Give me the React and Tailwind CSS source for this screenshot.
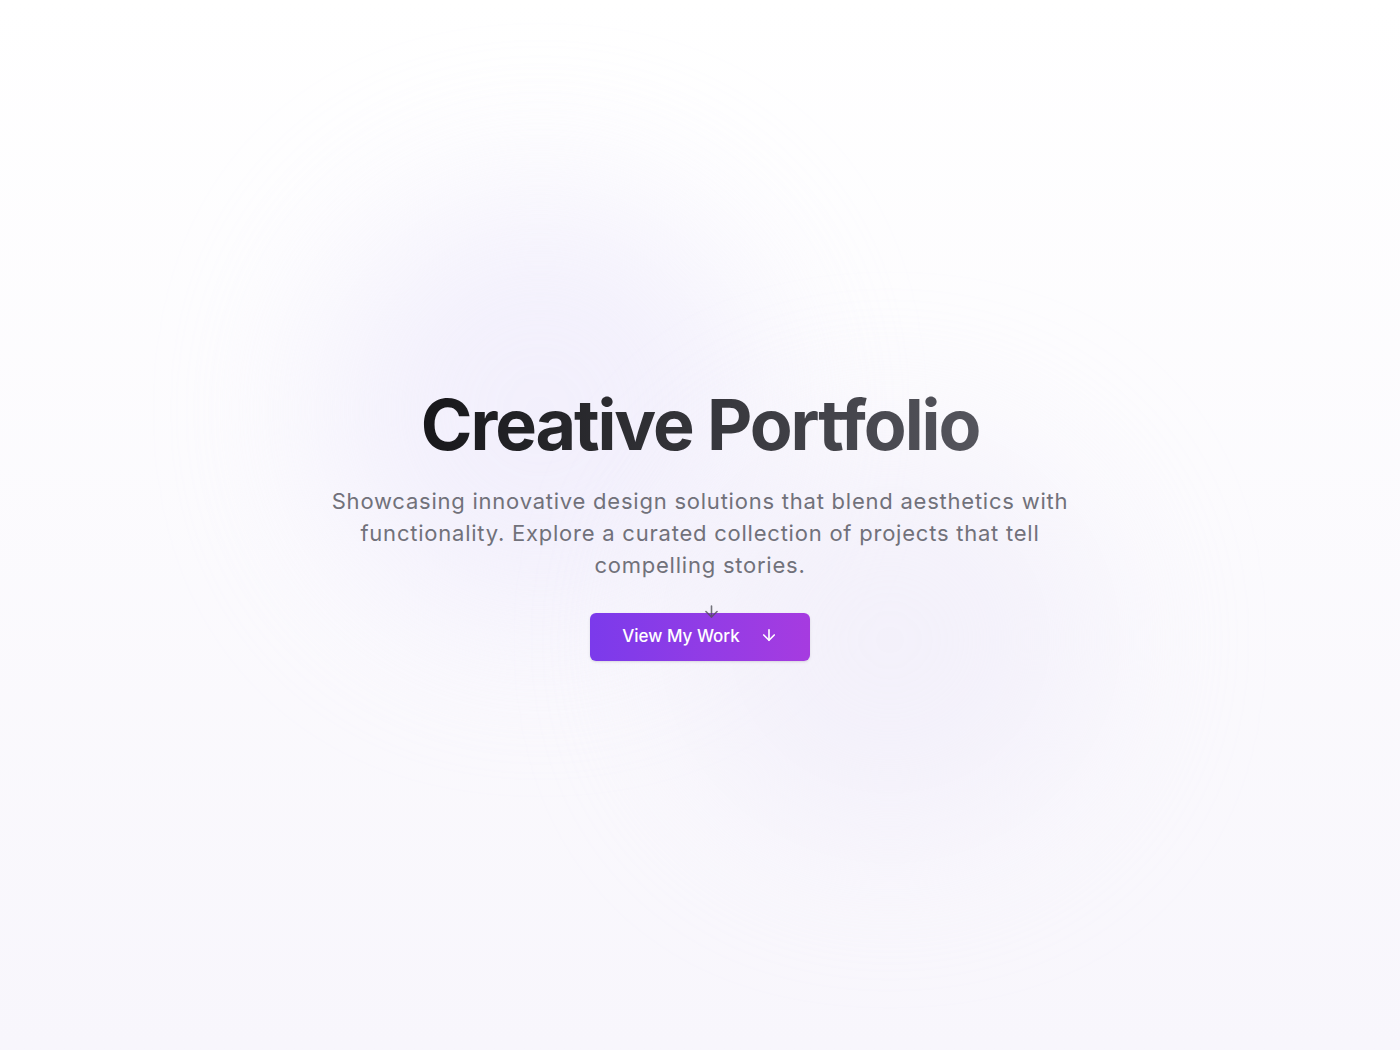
import React from "react";

function ArrowDown({ className, sw = 2 }) {
  return (
    <svg viewBox="0 0 24 24" fill="none" stroke="currentColor" strokeWidth={sw} strokeLinecap="round" strokeLinejoin="round" className={className}>
      <path d="M12 5v14" />
      <path d="m19 12-7 7-7-7" />
    </svg>
  );
}

export default function App() {
  return (
    <div className="relative h-[1050px] w-full overflow-hidden bg-gradient-to-b from-[#ffffff] to-[#f8f6fc]" style={{ fontFamily: "Inter, 'Noto Sans', sans-serif" }}>
      <div className="absolute left-[320px] top-[190px] h-[440px] w-[440px] rounded-full bg-[#ece8fb] opacity-60 blur-[80px]" />
      <div className="absolute left-[680px] top-[440px] h-[400px] w-[420px] rounded-full bg-[#ece8f8] opacity-50 blur-[80px]" />
      <div className="relative flex h-full flex-col items-center justify-center px-6 pb-[4px]">
        <h1 className="bg-gradient-to-r from-[#18181b] to-[#55555d] bg-clip-text pb-1 text-[70px] font-bold leading-[80px] tracking-[-0.03em] text-transparent">
          Creative Portfolio
        </h1>
        <p className="mt-4 max-w-[760px] text-center text-[22px] leading-[32px] text-[#71717a] tracking-[0.035em]">
          Showcasing innovative design solutions that blend aesthetics with functionality. Explore a curated collection of projects that tell compelling stories.
        </p>
        <div className="relative mt-8">
          <button className="flex h-12 w-[220px] items-center justify-center gap-5 rounded-md bg-gradient-to-r from-[#7b3aeb] to-[#a63be0] text-[17px] font-medium text-white shadow-sm">
            <span>View My Work</span>
            <ArrowDown className="-mt-1 h-[18px] w-[18px]" sw={2.2} />
          </button>
          <ArrowDown className="absolute left-[112px] top-[-11px] h-[19px] w-[19px] text-[#52525b] opacity-80" />
        </div>
      </div>
    </div>
  );
}
